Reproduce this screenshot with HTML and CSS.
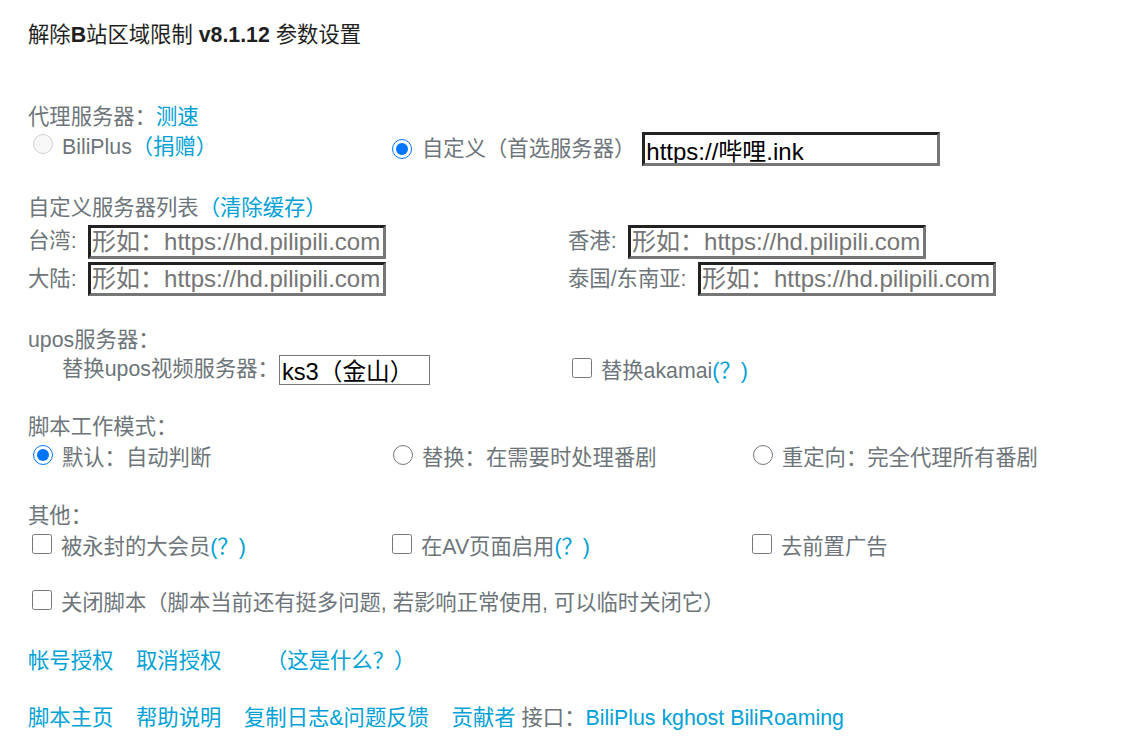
FILE: index.html
```html
<!DOCTYPE html>
<html lang="zh-CN">
<head>
<meta charset="utf-8">
<title>解除B站区域限制 参数设置</title>
<link rel="stylesheet" href="styles.css">
</head>
<body>
<div class="page">
  <div class="title">解除<span class="bold">B</span>站区域限制 <span class="bold">v8.1.12</span> 参数设置</div>

  <div class="sec sec-proxy">
    <div class="line">代理服务器：<a class="lnk" href="#">测速</a></div>
    <div class="grid3">
      <div class="cell"><input class="rd" type="radio" name="srv" disabled> BiliPlus<a class="lnk" href="#">（捐赠）</a></div>
      <div class="cell span2 custom"><input class="rd" type="radio" name="srv" checked><span class="custom-lab">自定义（首选服务器）</span><input class="txt" type="text" value="https://哔哩.ink"></div>
    </div>
  </div>

  <div class="sec sec-list">
    <div class="line">自定义服务器列表<a class="lnk" href="#">（清除缓存）</a></div>
    <div class="grid2">
      <div class="srow"><span class="lab">台湾:</span><input class="txt" type="text" placeholder="形如：https://hd.pilipili.com"></div>
      <div class="srow"><span class="lab">香港:</span><input class="txt" type="text" placeholder="形如：https://hd.pilipili.com"></div>
      <div class="srow"><span class="lab">大陆:</span><input class="txt" type="text" placeholder="形如：https://hd.pilipili.com"></div>
      <div class="srow"><span class="lab">泰国/东南亚:</span><input class="txt" type="text" placeholder="形如：https://hd.pilipili.com"></div>
    </div>
  </div>

  <div class="sec sec-upos">
    <div class="line">upos服务器：</div>
    <div class="grid2">
      <div class="cell indent">替换upos视频服务器：<input class="sel" type="text" value="ks3（金山）"></div>
      <div class="cell"><input class="cb" type="checkbox"> 替换akamai<a class="lnk" href="#">(？)</a></div>
    </div>
  </div>

  <div class="sec sec-mode">
    <div class="line">脚本工作模式：</div>
    <div class="grid3">
      <div class="cell"><input class="rd" type="radio" name="mode" checked> 默认：自动判断</div>
      <div class="cell"><input class="rd" type="radio" name="mode"> 替换：在需要时处理番剧</div>
      <div class="cell"><input class="rd" type="radio" name="mode"> 重定向：完全代理所有番剧</div>
    </div>
  </div>

  <div class="sec sec-other">
    <div class="line">其他：</div>
    <div class="grid3">
      <div class="cell"><input class="cb" type="checkbox"> 被永封的大会员<a class="lnk" href="#">(？)</a></div>
      <div class="cell"><input class="cb" type="checkbox"> 在AV页面启用<a class="lnk" href="#">(？)</a></div>
      <div class="cell"><input class="cb" type="checkbox"> 去前置广告</div>
    </div>
    <div class="line close"><input class="cb" type="checkbox"> 关闭脚本（脚本当前还有挺多问题, 若影响正常使用, 可以临时关闭它）</div>
  </div>

  <div class="sec sec-auth">
    <div class="line"><a class="lnk gap" href="#">帐号授权</a><a class="lnk gap2" href="#">取消授权</a><a class="lnk" href="#">（这是什么？）</a></div>
  </div>

  <div class="sec sec-foot">
    <div class="line"><a class="lnk gap" href="#">脚本主页</a><a class="lnk gap" href="#">帮助说明</a><a class="lnk gap" href="#">复制日志&amp;问题反馈</a><a class="lnk" href="#">贡献者</a> 接口：<a class="lnk" href="#">BiliPlus</a> <a class="lnk" href="#">kghost</a> <a class="lnk" href="#">BiliRoaming</a></div>
  </div>
</div>
</body>
</html>
```

FILE: styles.css
```css
html, body {
  margin: 0;
  padding: 0;
  background: #ffffff;
}

body {
  font-family: "Liberation Sans", "Noto Sans CJK SC", sans-serif;
  font-size: 21.33px;
  line-height: 28.5px;
  color: #6d757a;
}

.page {
  width: 1080px;
  padding: 20.75px 0 0 28px;
}

.title {
  color: #1f1f1f;
}

.bold {
  font-weight: bold;
}

.lnk {
  color: #00a1d6;
  text-decoration: none;
}

.line {
  white-space: nowrap;
}

.sec-proxy { margin-top: 53.5px; }
.sec-list { margin-top: 28px; }
.sec-upos { margin-top: 28.5px; }
.sec-mode { margin-top: 28px; }
.sec-other { margin-top: 30px; }
.sec-auth { margin-top: 29px; }
.sec-foot { margin-top: 28.5px; }

.close { margin-top: 26px; }

.grid3 {
  display: grid;
  grid-template-columns: repeat(3, 360px);
  align-items: start;
}

.grid2 {
  display: grid;
  grid-template-columns: repeat(2, 540px);
  align-items: start;
}

.cell {
  white-space: nowrap;
}

.span2 {
  grid-column: span 2;
}

.custom {
  display: flex;
  align-items: center;
  margin-top: 1px;
}

.custom .rd {
  margin: 0 0 0 4px;
}

.custom-lab {
  margin-left: 10px;
  margin-right: 7px;
}

.indent {
  padding-left: 34px;
}

.rd {
  width: 20px;
  height: 20px;
  margin: 3px 3px 0 5px;
  vertical-align: baseline;
}

.cb {
  width: 20px;
  height: 20px;
  margin: 3px 3px 2px 4px;
  vertical-align: baseline;
}

.txt {
  box-sizing: border-box;
  width: 298px;
  height: 34px;
  margin: 0;
  padding: 0 1px;
  border-style: solid;
  border-width: 3px;
  border-color: #222222 #767676 #767676 #222222;
  font-family: "Liberation Sans", "Noto Sans CJK SC", sans-serif;
  font-size: 24px;
  color: #000000;
  background: #ffffff;
  outline: none;
}

.txt::placeholder {
  color: #757575;
}

.srow {
  display: flex;
  align-items: center;
  height: 37.5px;
  white-space: nowrap;
}

.lab {
  margin-right: 11.5px;
}

.sel {
  box-sizing: border-box;
  width: 151px;
  height: 30px;
  margin: 0;
  padding: 0 2px;
  border: 1px solid #767676;
  font-family: "Liberation Sans", "Noto Sans CJK SC", sans-serif;
  font-size: 23.7px;
  color: #000000;
  background: #ffffff;
  vertical-align: middle;
  outline: none;
}

.gap { margin-right: 22.7px; }
.gap2 { margin-right: 44.7px; }
```
